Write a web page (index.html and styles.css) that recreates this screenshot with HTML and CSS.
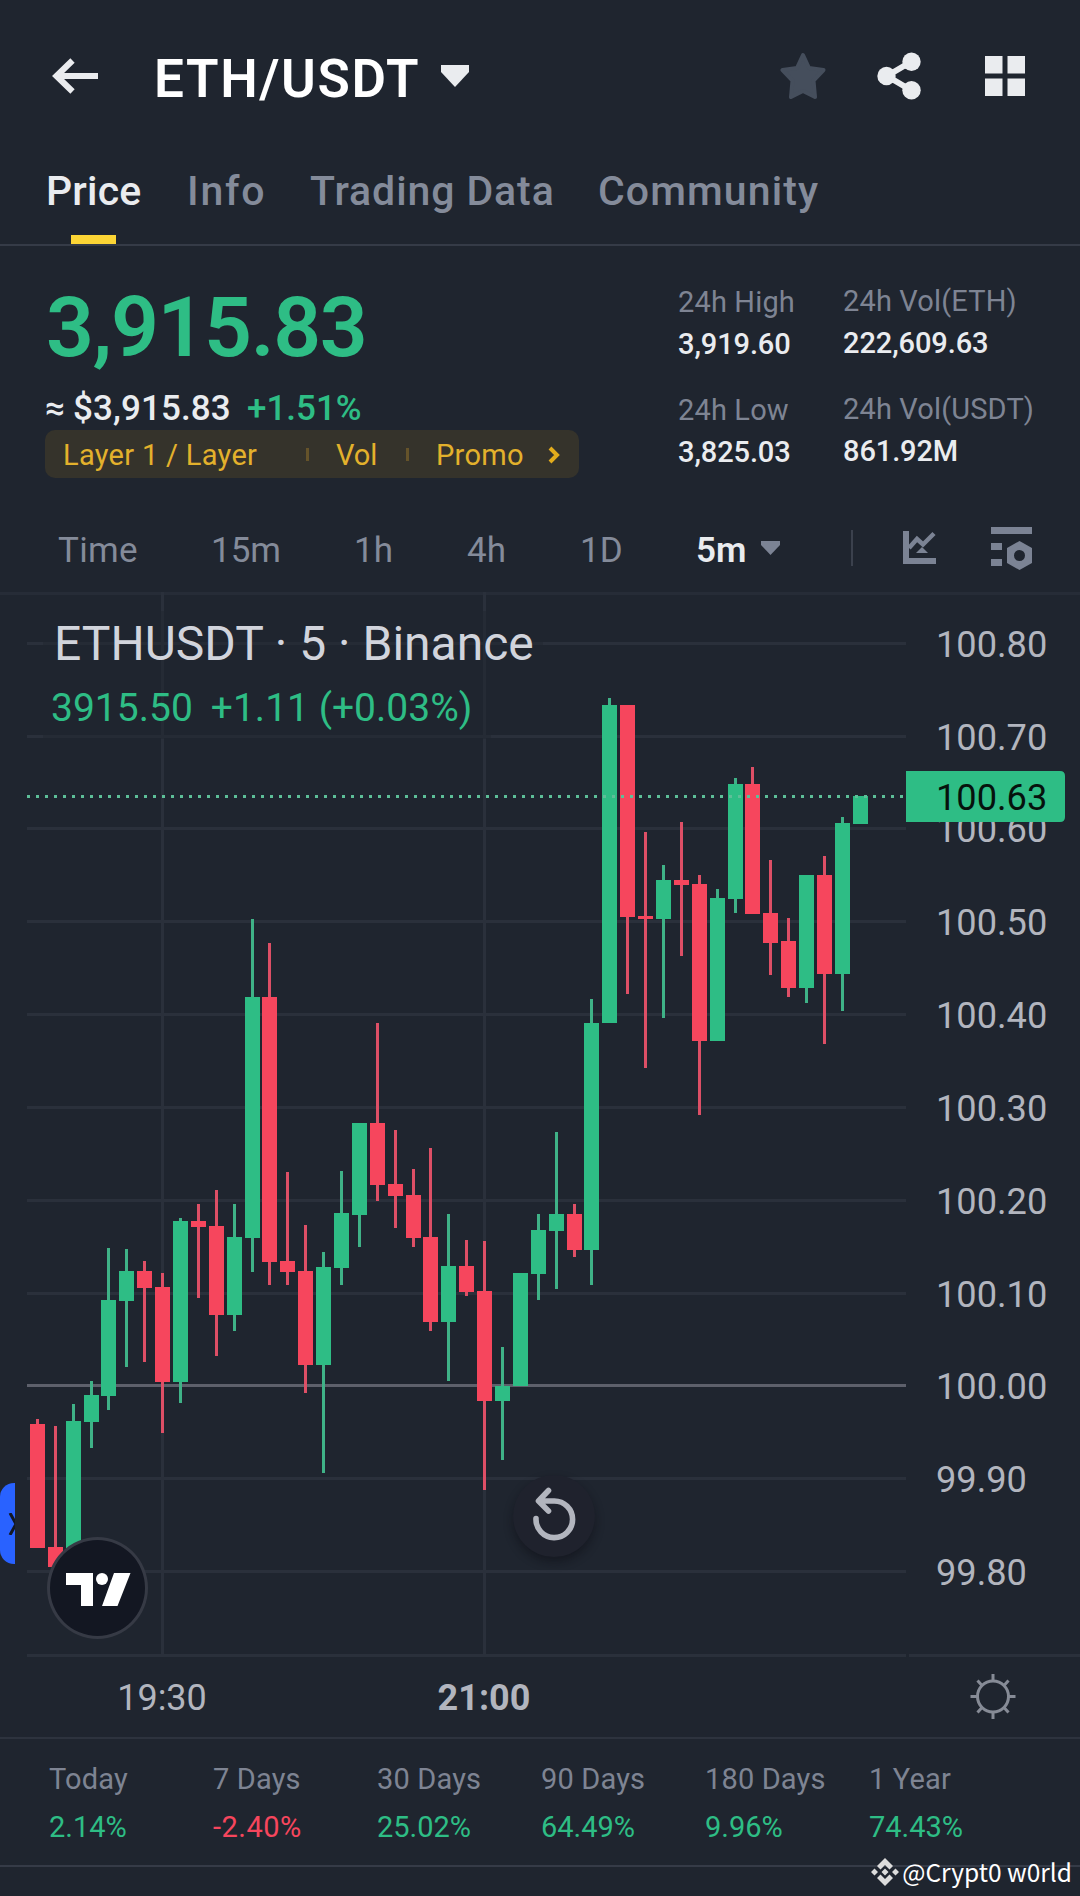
FILE: index.html
```html
<!DOCTYPE html>
<html lang="en">
<head>
    <meta charset="UTF-8">
    <meta name="viewport" content="width=device-width, initial-scale=1.0">
    <title>ETH/USDT</title>
    <link rel="stylesheet" href="styles.css">
</head>
<body>
    <div class="header">
        <svg class="back" width="46" height="36" viewBox="0 0 46 36">
            <path d="M46 18H5M20.500 2.500L4.500 18L20.500 33.500" fill="none" stroke="#eaecef" stroke-width="6.200"/>
        </svg>
        <h1 class="title">ETH/USDT</h1>
        <svg class="caret" width="28" height="22" viewBox="0 0 28 22">
            <path d="M0 0H28V7L14 22L0 7Z" fill="#eaecef"/>
        </svg>
        <div class="actions">
            <svg width="46" height="48" viewBox="0 0 46 48">
                <path d="M23 3L29 16L43.500 18L33.500 28.500L35 45L23 39L11 45L12.500 28.500L2.500 18L17 16Z" fill="#454e5c" stroke="#454e5c" stroke-width="4" stroke-linejoin="round"/>
            </svg>
            <svg width="44" height="48" viewBox="0 0 44 48">
                <path d="M34.500 9.500L10 24L34.500 38.500" fill="none" stroke="#eaecef" stroke-width="6"/>
                <circle cx="9.500" cy="24" r="9.200" fill="#eaecef"/>
                <circle cx="34.500" cy="9.700" r="9.200" fill="#eaecef"/>
                <circle cx="34.500" cy="38.300" r="9.200" fill="#eaecef"/>
            </svg>
            <svg width="40" height="40" viewBox="0 0 40 40">
                <path d="M0 0H17.500V17.500H0ZM22.500 0H40V17.500H22.500ZM0 22.500H17.500V40H0ZM22.500 22.500H40V40H22.500Z" fill="#eaecef"/>
            </svg>
        </div>
    </div>

    <div class="tabs">
        <span class="tab active">Price</span>
        <span class="tab tab-info">Info</span>
        <span class="tab tab-data">Trading Data</span>
        <span class="tab tab-community">Community</span>
    </div>

    <div class="summary">
        <div class="price-box">
            <div class="price">3,915.83</div>
            <div class="sub-price"><span class="approx">≈</span><span class="usd">$3,915.83</span><span class="change">+1.51%</span></div>
            <div class="tags">
                <span class="tag-layer">Layer 1 / Layer</span>
                <i class="tag-sep"></i>
                <span class="tag-vol">Vol</span>
                <i class="tag-sep"></i>
                <span class="tag-promo">Promo</span>
                <svg width="12" height="18" viewBox="0 0 12 18">
                    <path d="M2 2L9 9L2 16" fill="none" stroke="#e3ac1c" stroke-width="4"/>
                </svg>
            </div>
        </div>
        <div class="stats">
            <div class="stat-col">
                <p class="label">24h High</p>
                <p class="value">3,919.60</p>
                <p class="label second">24h Low</p>
                <p class="value">3,825.03</p>
            </div>
            <div class="stat-col vol-col">
                <p class="label">24h Vol(ETH)</p>
                <p class="value">222,609.63</p>
                <p class="label second">24h Vol(USDT)</p>
                <p class="value">861.92M</p>
            </div>
        </div>
    </div>

    <div class="intervals">
        <span class="iv iv-time">Time</span>
        <span class="iv iv-15m">15m</span>
        <span class="iv iv-1h">1h</span>
        <span class="iv iv-4h">4h</span>
        <span class="iv iv-1d">1D</span>
        <span class="iv iv-5m">5m</span>
        <svg class="iv-caret" width="19" height="14" viewBox="0 0 19 14">
            <path d="M0 0H19V4L9.500 14L0 4Z" fill="#7b8394"/>
        </svg>
        <i class="iv-sep"></i>
        <svg class="iv-chart" width="33" height="33" viewBox="0 0 33 33">
            <path d="M3 0V30H33" fill="none" stroke="#7b8394" stroke-width="6"/>
            <path d="M6 17L14 8L20 13.500L31 2.500" fill="none" stroke="#7b8394" stroke-width="4.500"/>
            <path d="M19 16L25 22H13Z" fill="#7b8394"/>
        </svg>
        <svg class="iv-settings" width="41" height="43" viewBox="0 0 41 43">
            <path d="M0 0H41V7H0ZM0 16H11V23H0ZM0 32H11V39H0Z" fill="#7b8394"/>
            <path fill-rule="evenodd" d="M28.500 14L41 21V36L28.500 43L16 36V21ZM28.500 23A5.500 5.500 0 1 0 28.500 34A5.500 5.500 0 1 0 28.500 23Z" fill="#7b8394"/>
        </svg>
    </div>

    <div class="chart">
        <svg class="plot" width="1080" height="1145" viewBox="0 592 1080 1145">
            <g id="grid"></g>
            <g id="candles"></g>
            <line x1="27" y1="796.500" x2="906" y2="796.500" stroke="#5dbf98" stroke-width="3" stroke-dasharray="3 6"/>
            <g id="scale" class="scale"></g>
            <path d="M906 771H1060Q1065 771 1065 776V817Q1065 822 1060 822H906Z" fill="#2ebd85"/>
            <text class="last" x="936" y="810">100.63</text>
            <text class="time" x="162" y="1710">19:30</text>
            <text class="time bold" x="484" y="1710">21:00</text>
            <g fill="none" stroke="#868b96" stroke-width="3">
                <circle cx="993" cy="1696.500" r="15.500"/>
                <path d="M993 1674V1681M993 1712V1719M970.500 1696.500H977.500M1008.500 1696.500H1015.500M977.500 1680.500L982 1685.500M1008.500 1680.500L1004 1685.500M977.500 1712.500L982 1707.500M1008.500 1712.500L1004 1707.500"/>
            </g>
        </svg>
        <div class="legend">
            <div class="symbol">ETHUSDT · 5 · Binance</div>
            <div class="ohlc"><span>3915.50</span><span class="diff">+1.11 (+0.03%)</span></div>
        </div>
        <div class="side-tab">
            <svg width="15" height="22" viewBox="0 0 15 22">
                <path d="M10 0L16 11L10 22" fill="none" stroke="#131722" stroke-width="3"/>
            </svg>
        </div>
        <div class="tv-logo">
            <svg width="65" height="33" viewBox="0 0 65 33">
                <path d="M0 0H27V33H15V12H0ZM48 0H64.500L51.500 33H36Z" fill="#fff"/>
                <circle cx="36" cy="6" r="6" fill="#fff"/>
            </svg>
        </div>
        <div class="reset">
            <svg width="82" height="82" viewBox="0 0 82 82">
                <path d="M23 43.500A18.300 18.300 0 1 0 41 26H27M35.500 15.500L25.500 26L35.500 36" fill="none" stroke="#b2b5be" stroke-width="5.600" stroke-linecap="round" stroke-linejoin="round"/>
            </svg>
        </div>
    </div>

    <div class="periods">
        <div class="period"><p class="label">Today</p><p class="up">2.14%</p></div>
        <div class="period"><p class="label">7 Days</p><p class="down">-2.40%</p></div>
        <div class="period"><p class="label">30 Days</p><p class="up">25.02%</p></div>
        <div class="period"><p class="label">90 Days</p><p class="up">64.49%</p></div>
        <div class="period"><p class="label">180 Days</p><p class="up">9.96%</p></div>
        <div class="period"><p class="label">1 Year</p><p class="up">74.43%</p></div>
    </div>

    <div class="author">
        <svg width="28" height="28" viewBox="0 0 28 28">
            <path d="M14 0L22 8L18.500 11.500L14 7L9.500 11.500L6 8ZM14 28L22 20L18.500 16.500L14 21L9.500 16.500L6 20ZM14 10.500L17.500 14L14 17.500L10.500 14ZM3.500 10.500L7 14L3.500 17.500L0 14ZM24.500 10.500L28 14L24.500 17.500L21 14Z" fill="#dcdcdc"/>
        </svg>
        <span>@Crypt0 w0rld</span>
    </div>

    <script src="chart.js"></script>
</body>
</html>
```

FILE: styles.css
```css
* {
    box-sizing: border-box;
}

body {
    font-family: Roboto, "Liberation Sans", sans-serif;
    background: #1f252f;
    color: #eaecef;
    width: 1080px;
    height: 1896px;
    position: relative;
    margin: 0;
    padding: 0;
    overflow: hidden;
}

p, h1 {
    margin: 0;
}

svg {
    display: block;
    flex-shrink: 0;
}

/* Header */
.header {
    display: flex;
    align-items: center;
    height: 152px;
    padding: 0 55px 0 52px;
}

.title {
    font-size: 53px;
    font-weight: 600;
    line-height: 62px;
    letter-spacing: 1.6px;
    color: #fff;
    padding-top: 5px;
    margin-left: 56px;
    width: 287px;
}

.actions {
    display: flex;
    align-items: center;
    margin-left: auto;
}

.actions svg + svg {
    margin-left: 51px;
}

.actions svg:last-child {
    margin-left: 64px;
}

/* Tabs */
.tabs {
    display: flex;
    height: 94px;
    padding-left: 46px;
    border-bottom: 2px solid #353b47;
    font-size: 41px;
    font-weight: 500;
    line-height: 78px;
    color: #848b9a;
}

.active {
    color: #eaecef;
    background: linear-gradient(#fcd535, #fcd535) no-repeat 25px 83px / 45px 9px;
}

.tab {
    white-space: nowrap;
    width: 141px;
    letter-spacing: 0.2px;
}

.tab-info {
    letter-spacing: 1.8px;
    width: 123px;
}

.tab-data {
    letter-spacing: 0.9px;
    width: 288px;
}

.tab-community {
    letter-spacing: 1.1px;
    width: auto;
}

/* Price summary */
.summary {
    display: flex;
    height: 262px;
    padding: 32px 0 0 45px;
}

.price-box {
    width: 633px;
}

.price {
    font-size: 84px;
    font-weight: 600;
    line-height: 100px;
    letter-spacing: -1.4px;
    color: #2ebd85;
    padding-left: 1px;
}

.sub-price {
    display: flex;
    font-size: 35px;
    font-weight: 500;
    line-height: 44px;
    margin-top: 9px;
}

.approx {
    width: 28px;
}

.usd {
    width: 174px;
    letter-spacing: 0.1px;
}

.change {
    color: #2ebd85;
}

.tags {
    display: flex;
    align-items: center;
    width: 534px;
    height: 48px;
    margin-top: -1px;
    padding: 1px 0 0 18px;
    border-radius: 10px;
    background: #35332b;
    color: #e3b12c;
    font-size: 29px;
}

.tag-layer {
    width: 243px;
    letter-spacing: 0.3px;
}

.tag-vol {
    width: 70px;
    padding-left: 27px;
    box-sizing: content-box;
}

.tag-promo {
    width: 112px;
    padding-left: 27px;
    letter-spacing: 0.3px;
    box-sizing: content-box;
}

.tag-sep {
    width: 3px;
    height: 13px;
    background: #65532a;
}

.stats {
    display: flex;
    font-size: 29px;
    line-height: 42px;
    padding-top: 3px;
}

.stat-col {
    width: 165px;
}

.vol-col {
    margin-top: -1px;
    white-space: nowrap;
}

.label {
    color: #7e8493;
    letter-spacing: 0.15px;
}

.value {
    font-weight: 500;
    letter-spacing: -0.1px;
}

.second {
    margin-top: 24px;
}

/* Interval bar */
.intervals {
    display: flex;
    align-items: center;
    height: 84px;
    padding: 1px 0 0 58px;
    font-size: 35px;
    color: #848b9a;
}

.iv-time {
    width: 153px;
    letter-spacing: 0.3px;
}

.iv-15m {
    width: 143px;
}

.iv-1h {
    width: 113px;
}

.iv-4h {
    width: 113px;
}

.iv-1d {
    width: 116px;
}

.iv-5m {
    width: 65px;
    font-weight: 600;
    color: #eaecef;
}

.iv-caret {
    margin-bottom: 6px;
}

.iv-sep {
    width: 2px;
    height: 36px;
    margin: 0 50px 6px 71px;
    background: #3b414d;
}

.iv-chart {
    margin-bottom: 7px;
}

.iv-settings {
    margin: 0 0 5px 55px;
}

/* Chart */
.chart {
    position: relative;
    height: 1145px;
}

.scale, .last {
    font-size: 36.200px;
    fill: #b2b5be;
}

.last {
    fill: #06120d;
}

.time {
    font-size: 36px;
    fill: #b2b5be;
    text-anchor: middle;
}

.bold {
    font-weight: 700;
}

.legend {
    position: absolute;
    left: 43px;
    top: 19px;
    white-space: nowrap;
}

.symbol {
    width: 500px;
    padding-left: 11px;
    font-size: 48px;
    line-height: 66px;
    color: #d1d4dc;
    background: rgba(31, 37, 47, 0.5);
}

.ohlc {
    width: 448px;
    padding-left: 8px;
    font-size: 39px;
    line-height: 62px;
    color: #2ebd85;
    background: rgba(31, 37, 47, 0.5);
}

.diff {
    margin-left: 18px;
}

.side-tab {
    position: absolute;
    left: 0;
    top: 891px;
    width: 15px;
    height: 81px;
    padding-top: 30px;
    border-radius: 14px 0 0 14px;
    background: #2962ff;
    overflow: hidden;
}

.tv-logo {
    position: absolute;
    left: 47px;
    top: 945px;
    width: 101px;
    height: 102px;
    padding: 33px 0 0 16px;
    border: 3px solid #363a45;
    border-radius: 50%;
    background: #131722;
}

.reset {
    position: absolute;
    left: 513px;
    top: 883px;
    width: 82px;
    height: 82px;
    border-radius: 50%;
    background: #1f222d;
    box-shadow: 0 5px 10px rgba(10, 12, 18, 0.45);
}

/* Period changes */
.periods {
    display: flex;
    height: 130px;
    padding: 16px 0 0 49px;
    border-top: 2px solid #2d333e;
    border-bottom: 2px solid #353b47;
    font-size: 29px;
    line-height: 48px;
}

.period {
    width: 164px;
}

.up {
    color: #2ebd85;
}

.down {
    color: #f6465d;
    letter-spacing: 0.5px;
}

.author {
    position: absolute;
    right: 8px;
    bottom: 5px;
    display: flex;
    align-items: center;
    gap: 3px;
    font-family: "Noto Sans CJK SC", sans-serif;
    font-size: 24.500px;
    font-weight: 400;
    line-height: 38px;
    color: #fff;
}
```

FILE: chart.js
```js
const NS = 'http://www.w3.org/2000/svg';
const UP = '#2ebd85';
const DOWN = '#f6465d';

// [x, direction, high, body top, body bottom, low]
const candles = [
    [30, 0, 1419, 1424, 1548, 1548], [48, 0, 1426, 1547, 1567, 1567],
    [66, 1, 1404, 1421, 1567, 1567], [84, 1, 1381, 1395, 1422, 1448],
    [101, 1, 1248, 1300, 1396, 1410], [119, 1, 1249, 1271, 1301, 1367],
    [137, 0, 1261, 1271, 1288, 1362], [155, 0, 1273, 1287, 1382, 1433],
    [173, 1, 1218, 1221, 1382, 1403], [191, 0, 1204, 1221, 1227, 1298],
    [209, 0, 1190, 1226, 1315, 1356], [227, 1, 1204, 1237, 1315, 1331],
    [245, 1, 919, 997, 1238, 1272], [262, 0, 943, 997, 1262, 1285],
    [280, 0, 1172, 1261, 1272, 1285], [298, 0, 1225, 1271, 1365, 1393],
    [316, 1, 1252, 1267, 1365, 1473], [334, 1, 1171, 1213, 1268, 1285],
    [352, 1, 1123, 1123, 1215, 1247], [370, 0, 1023, 1123, 1185, 1201],
    [388, 0, 1130, 1184, 1196, 1228], [406, 0, 1169, 1195, 1238, 1247],
    [423, 0, 1148, 1237, 1322, 1331], [441, 1, 1214, 1266, 1322, 1381],
    [459, 0, 1240, 1266, 1292, 1296], [477, 0, 1241, 1291, 1401, 1490],
    [495, 1, 1347, 1386, 1401, 1460], [513, 1, 1273, 1273, 1386, 1386],
    [531, 1, 1214, 1230, 1274, 1300], [549, 1, 1132, 1214, 1231, 1289],
    [567, 0, 1204, 1214, 1250, 1257], [584, 1, 999, 1023, 1250, 1285],
    [602, 1, 698, 705, 1023, 1023], [620, 0, 705, 705, 917, 994],
    [638, 0, 832, 916, 919, 1068], [656, 1, 865, 880, 919, 1018],
    [674, 0, 822, 880, 885, 956], [692, 0, 875, 884, 1041, 1115],
    [710, 1, 889, 898, 1041, 1041], [728, 1, 778, 784, 899, 913],
    [745, 0, 767, 784, 914, 914], [763, 0, 860, 913, 943, 975],
    [781, 0, 918, 941, 988, 997], [799, 1, 875, 875, 988, 1003],
    [817, 0, 856, 875, 974, 1044], [835, 1, 817, 823, 974, 1011],
    [853, 1, 796, 796, 824, 824]
];

function rect(parent, x, y, w, h, fill) {
    const el = document.createElementNS(NS, 'rect');
    el.setAttribute('x', x);
    el.setAttribute('y', y);
    el.setAttribute('width', w);
    el.setAttribute('height', h);
    el.setAttribute('fill', fill);
    parent.appendChild(el);
}

const grid = document.getElementById('grid');
const scale = document.getElementById('scale');
const body = document.getElementById('candles');

// borders of the pane
rect(grid, 0, 592, 1080, 3, '#262c37');
rect(grid, 27, 1654, 879, 3, '#2a303b');
rect(grid, 909, 1654, 171, 3, '#2a303b');

rect(grid, 161, 592, 3, 1062, '#2a303b');
rect(grid, 483, 592, 3, 1062, '#2a303b');

const levels = [642, 735, 827, 920, 1013, 1106, 1199, 1292, 1384, 1477, 1570];
levels.forEach((y, i) => {
    const price = (100.8 - i * 0.1).toFixed(2);
    rect(grid, 27, y, 879, 3, price === '100.00' ? '#5d606b' : '#2a303b');

    const label = document.createElementNS(NS, 'text');
    label.setAttribute('x', 936);
    label.setAttribute('y', y + 14.5);
    label.textContent = price;
    scale.appendChild(label);
});

candles.forEach(([x, up, high, top, bottom, low]) => {
    rect(body, x + 6, high, 3, low - high, up ? '#3fb287' : '#dd4f66');
    rect(body, x, top, 15, bottom - top, up ? UP : DOWN);
});
```
